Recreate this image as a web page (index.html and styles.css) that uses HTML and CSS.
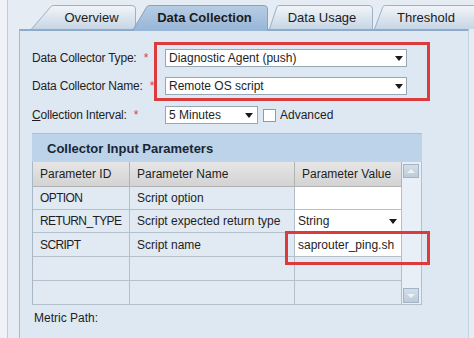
FILE: index.html
```html
<!DOCTYPE html>
<html>
<head>
<meta charset="utf-8">
<link rel="stylesheet" href="styles.css">
</head>
<body>
<div class="screen">
  <div class="rail"></div>
  <div class="main">
    <div class="tabs">
      <div class="tab tab-overview">
        <svg width="105" height="25" viewBox="0 0 105 25">
          <defs>
            <linearGradient id="gIdle" x1="0" y1="0" x2="0" y2="1">
              <stop offset="0" stop-color="#f1f5f9"/>
              <stop offset="1" stop-color="#c7d6e5"/>
            </linearGradient>
            <linearGradient id="gActive" x1="0" y1="0" x2="0" y2="1">
              <stop offset="0" stop-color="#b7cde5"/>
              <stop offset="1" stop-color="#97b5d6"/>
            </linearGradient>
          </defs>
          <path d="M0.5 25 L20 2.5 Q21 1.5 23 1.5 L101 1.5 Q104.5 1.5 104.5 5 L104.5 25" fill="url(#gIdle)" stroke="#9cb1c7"/>
        </svg>
        <span class="tab-label">Overview</span>
      </div>
      <div class="tab tab-collection active">
        <svg width="135" height="27" viewBox="0 0 135 27">
          <path d="M0.5 27 L0.5 25 L14 2.5 Q15 1.5 17 1.5 L131 1.5 Q134.5 1.5 134.5 5 L134.5 27" fill="url(#gActive)" stroke="#85a3c3"/>
        </svg>
        <span class="tab-label">Data Collection</span>
      </div>
      <div class="tab tab-usage">
        <svg width="104" height="25" viewBox="0 0 104 25">
          <path d="M0.5 25 L8 2.5 Q9 1.5 11 1.5 L100 1.5 Q103.5 1.5 103.5 5 L103.5 25" fill="url(#gIdle)" stroke="#9cb1c7"/>
        </svg>
        <span class="tab-label">Data Usage</span>
      </div>
      <div class="tab tab-threshold">
        <svg width="110" height="25" viewBox="0 0 110 25">
          <path d="M0.5 25 L9 2.5 Q10 1.5 12 1.5 L106 1.5 Q109.5 1.5 109.5 5 L109.5 25" fill="url(#gIdle)" stroke="#9cb1c7"/>
        </svg>
        <span class="tab-label">Threshold</span>
      </div>
    </div>

    <div class="panel">
      <div class="form">
        <div class="label">Data Collector Type: <span class="req">*</span></div>
        <div class="select select-wide"><span>Diagnostic Agent (push)</span><span class="caret"></span></div>

        <div class="label">Data Collector Name: <span class="req">*</span></div>
        <div class="select select-wide"><span>Remote OS script</span><span class="caret"></span></div>

        <div class="label"><u>C</u>ollection Interval: <span class="req">*</span></div>
        <div class="field-line">
          <div class="select select-short"><span>5 Minutes</span><span class="caret"></span></div>
          <span class="check"></span>
          <span>Advanced</span>
        </div>
      </div>

      <div class="params">
        <div class="params-head">Collector Input Parameters</div>
        <div class="grid">
          <div class="c hc">Parameter ID</div>
          <div class="c hc">Parameter Name</div>
          <div class="c hc">Parameter Value</div>
          <div class="scroll">
            <span class="sbtn"><span class="tri-up"></span></span>
            <span class="sbtn sbtn-down"><span class="tri-down"></span></span>
          </div>

          <div class="c id">OPTION</div>
          <div class="c">Script option</div>
          <div class="c v"></div>

          <div class="c id">RETURN_TYPE</div>
          <div class="c">Script expected return type</div>
          <div class="c v vsel"><span>String</span><span class="caret"></span></div>

          <div class="c id">SCRIPT</div>
          <div class="c">Script name</div>
          <div class="c v">saprouter_ping.sh</div>

          <div class="c"></div>
          <div class="c"></div>
          <div class="c"></div>

          <div class="c"></div>
          <div class="c"></div>
          <div class="c"></div>
        </div>
        <div class="metric">Metric Path:</div>
      </div>
    </div>
  </div>
  <div class="mark mark-fields"></div>
  <div class="mark mark-script"></div>
</div>
</body>
</html>
```
FILE: styles.css
```css
* { box-sizing: border-box; }
html, body { margin: 0; padding: 0; }
body {
  width: 474px;
  height: 338px;
  overflow: hidden;
  background: #e9eef4;
  font-family: "Liberation Sans", Arial, sans-serif;
  font-size: 12px;
  color: #1e1e1e;
}
.screen {
  position: relative;
  display: flex;
  height: 338px;
}
.rail {
  width: 8px;
  flex: none;
  background: #eef2f6;
  border-right: 1px solid #bfccd9;
}
.main {
  flex: 1;
  padding: 4px 0 0 11px;
  background: #e6ecf3;
}

/* tabs */
.tabs {
  display: flex;
  height: 25px;
  padding-left: 12px;
  position: relative;
  z-index: 1;
}
.tab {
  position: relative;
  flex: none;
  height: 25px;
  display: flex;
  align-items: center;
  justify-content: center;
  padding-top: 1px;
  font-size: 13px;
  color: #1b1b1b;
}
.tab svg {
  position: absolute;
  left: 0;
  top: 0;
  overflow: visible;
}
.tab-label { position: relative; white-space: nowrap; }
.tab-overview { width: 105px; padding-left: 16px; }
.tab-collection { width: 135px; margin-left: -3px; padding-left: 8px; z-index: 2; font-weight: bold; }
.tab-usage { width: 104px; margin-left: 1px; padding-left: 2px; }
.tab-threshold { width: 110px; margin-left: 1px; padding-right: 6px; }

/* panel */
.panel {
  width: 450px;
  height: 309px;
  border-top: 2px solid #8dabca;
  border-left: 1px solid #a9bccf;
  border-right: 1px solid #c5d3e0;
  background: #dee8f2;
  padding: 13px 0 0 12px;
}
.form {
  display: grid;
  grid-template-columns: 133px auto;
  grid-template-rows: 28px 28px 30px;
  align-items: center;
}
.label { white-space: nowrap; letter-spacing: -0.2px; }
.req { color: #e0393e; margin-left: 4px; letter-spacing: 0; }
.select {
  display: flex;
  align-items: center;
  justify-content: space-between;
  height: 18px;
  background: #fff;
  border: 1px solid #98a7b6;
  padding: 0 3px 0 3px;
  white-space: nowrap;
}
.select-wide { width: 242px; }
.select-short { width: 93px; padding-right: 4px; }
.caret {
  width: 0;
  height: 0;
  border-left: 4.5px solid transparent;
  border-right: 4.5px solid transparent;
  border-top: 5px solid #1a1a1a;
}
.field-line {
  display: flex;
  align-items: center;
  gap: 4px;
}
.check {
  width: 13px;
  height: 13px;
  margin-left: 1px;
  border: 1px solid #8d9cab;
  background: #fff;
}

/* parameters table */
.params {
  margin-top: 3px;
  width: 390px;
}
.params-head {
  height: 29px;
  display: flex;
  align-items: center;
  padding-left: 15px;
  background: #bcd3ea;
  border-top: 1px solid #a9c1da;
  font-size: 13px;
  font-weight: bold;
  color: #1a2633;
}
.grid {
  display: grid;
  grid-template-columns: 97px 165px 107px 20px;
  grid-template-rows: 25px 23px 23px 24px 24px 24px;
  border-left: 1px solid #aab7c4;
}
.c {
  display: flex;
  align-items: center;
  padding-left: 7px;
  background: #e1e9f2;
  border-right: 1px solid #b3bfcb;
  border-bottom: 1px solid #b3bfcb;
  white-space: nowrap;
  overflow: hidden;
}
.id { letter-spacing: -0.6px; }
.hc {
  background: linear-gradient(#e6e6e6, #d3d3d3);
  border-right-color: #b2b2b2;
  border-bottom-color: #b2b2b2;
}
.v {
  background: #fff;
  padding-left: 3px;
}
.vsel {
  justify-content: space-between;
  padding-right: 4px;
}
.scroll {
  grid-column: 4;
  grid-row: 1 / 7;
  display: flex;
  flex-direction: column;
  justify-content: space-between;
  padding: 2px 1px 1px 1px;
  background: #e8eff6;
  border-right: 1px solid #b3bfcb;
  border-bottom: 1px solid #b3bfcb;
}
.sbtn {
  width: 16px;
  height: 14px;
  display: flex;
  align-items: center;
  justify-content: center;
  background: linear-gradient(#d4dee8, #bccbda);
  border: 1px solid #a4b4c4;
}
.sbtn-down { height: 15px; }
.tri-up {
  width: 0; height: 0;
  border-left: 4px solid transparent;
  border-right: 4px solid transparent;
  border-bottom: 4px solid #eef3f8;
}
.tri-down {
  width: 0; height: 0;
  border-left: 4px solid transparent;
  border-right: 4px solid transparent;
  border-top: 4px solid #eef3f8;
}
.metric {
  margin-top: 6px;
  padding-left: 2px;
  line-height: 14px;
}

/* red annotation frames */
.mark {
  position: absolute;
  border: 3px solid #dc3b3b;
  pointer-events: none;
}
.mark-fields { left: 154px; top: 42px; width: 276px; height: 59px; }
.mark-script { left: 285px; top: 231px; width: 145px; height: 34px; }
```
